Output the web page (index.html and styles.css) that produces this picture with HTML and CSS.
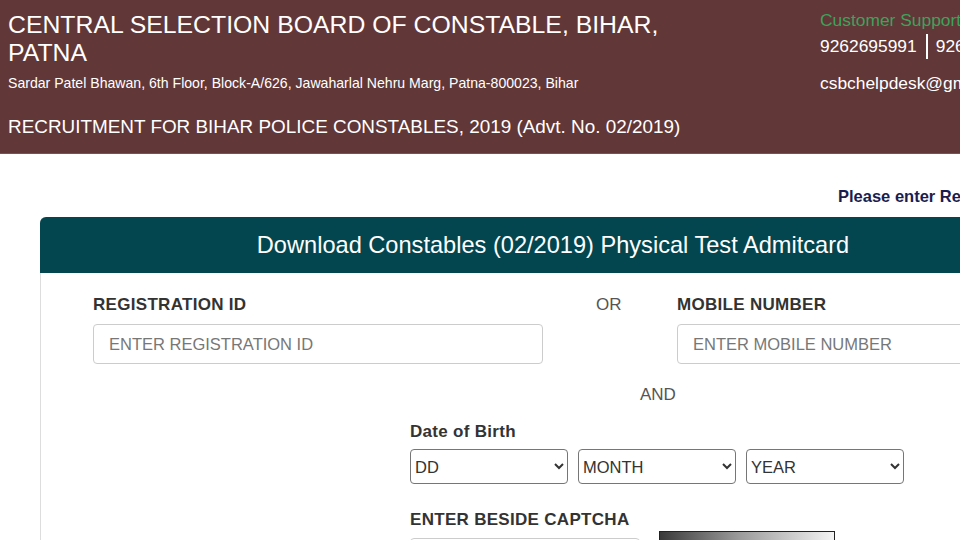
FILE: index.html
```
<!DOCTYPE html>
<html lang="en">
<head>
<meta charset="utf-8">
<title>CSBC Bihar - Physical Test Admitcard</title>
<link rel="stylesheet" href="styles.css">
</head>
<body>
<header class="top">
  <div class="brand">
    <h1 class="title">CENTRAL SELECTION BOARD OF CONSTABLE, BIHAR, PATNA</h1>
    <p class="addr">Sardar Patel Bhawan, 6th Floor, Block-A/626, Jawaharlal Nehru Marg, Patna-800023, Bihar</p>
    <p class="recruit">RECRUITMENT FOR BIHAR POLICE CONSTABLES, 2019 (Advt. No. 02/2019)</p>
  </div>
  <div class="support">
    <div class="cs">Customer Support</div>
    <div class="phones"><span>9262695991</span><span class="sep"></span><span>9262695992</span></div>
    <div class="mail">csbchelpdesk@gmail.com</div>
  </div>
</header>
<main class="main">
  <p class="notice">Please enter Registration ID or Mobile Number and Date of Birth</p>
  <section class="card">
    <div class="card-head">Download Constables (02/2019) Physical Test Admitcard</div>
    <div class="card-body">
      <div class="row-ids">
        <div class="col-id">
          <label class="lbl">REGISTRATION ID</label>
          <input class="txt" type="text" placeholder="ENTER REGISTRATION ID">
        </div>
        <div class="or">OR</div>
        <div class="col-id">
          <label class="lbl">MOBILE NUMBER</label>
          <input class="txt" type="text" placeholder="ENTER MOBILE NUMBER">
        </div>
      </div>
      <div class="and">AND</div>
      <div class="dob">
        <label class="lbl">Date of Birth</label>
        <div class="dob-row">
          <select class="sel"><option>DD</option></select>
          <select class="sel"><option>MONTH</option></select>
          <select class="sel"><option>YEAR</option></select>
        </div>
      </div>
      <div class="cap">
        <label class="lbl cap-lbl">ENTER BESIDE CAPTCHA</label>
        <div class="cap-row">
          <input class="txt cap-input" type="text">
          <div class="cap-img"></div>
        </div>
      </div>
    </div>
  </section>
</main>
</body>
</html>
```
FILE: styles.css
```
html, body {
  margin: 0;
  padding: 0;
  overflow: hidden;
  width: 960px;
  height: 540px;
  background: #fff;
  font-family: "Liberation Sans", Arial, sans-serif;
}
.top {
  display: flex;
  width: 1200px;
  height: 153px;
  background: #623737;
  border-bottom: 1px solid #7a5252;
  color: #fff;
}
.brand {
  width: 820px;
  flex-shrink: 0;
  padding-left: 8px;
  box-sizing: border-box;
}
.title {
  margin: 11px 0 0;
  width: 700px;
  font-size: 24.8px;
  font-weight: normal;
  line-height: 28px;
}
.addr {
  margin: 8px 0 0;
  font-size: 14.1px;
  line-height: 17px;
}
.recruit {
  margin: 24px 0 0;
  font-size: 18.9px;
  line-height: 22px;
}
.support {
  padding-top: 10px;
  font-size: 17.4px;
  white-space: nowrap;
}
.cs {
  color: #3fa15c;
  line-height: 21px;
}
.phones {
  display: flex;
  align-items: center;
  margin-top: 2px;
  height: 26px;
}
.sep {
  width: 2px;
  height: 25px;
  background: #fff;
  margin: 0 8px 0 9px;
}
.mail {
  margin-top: 14px;
  line-height: 21px;
}
.main {
  width: 1200px;
  padding-left: 40px;
}
.notice {
  margin: 32px 0 0 798px;
  font-size: 16.5px;
  font-weight: bold;
  color: #1c1c4e;
  line-height: 20px;
  white-space: nowrap;
}
.card {
  margin-top: 11px;
  width: 1024px;
  border: 1px solid #ddd;
  border-top: none;
  border-radius: 6px 6px 0 0;
}
.card-head {
  height: 56px;
  background: #03464f;
  color: #fff;
  border-radius: 6px 6px 0 0;
  font-size: 23.6px;
  line-height: 56px;
  text-align: center;
  margin: 0 -1px;
}
.card-body {
  padding: 22px 0 0 52px;
}
.row-ids {
  display: flex;
}
.col-id {
  width: 450px;
  flex-shrink: 0;
  display: flex;
  flex-direction: column;
}
.lbl {
  display: block;
  font-size: 17px;
  font-weight: bold;
  letter-spacing: 0.3px;
  color: #333;
  line-height: 20px;
}
.col-id .lbl {
  margin-bottom: 9px;
}
.txt {
  box-sizing: border-box;
  height: 40px;
  width: 450px;
  border: 1px solid #ccc;
  border-radius: 4px;
  padding: 0 15px;
  font-family: "Liberation Sans", Arial, sans-serif;
  font-size: 16.5px;
  color: #555;
  outline: none;
}
.txt::placeholder {
  color: #777;
}
.or {
  width: 134px;
  flex-shrink: 0;
  padding-left: 53px;
  box-sizing: border-box;
  font-size: 17px;
  color: #555;
  line-height: 20px;
}
.and {
  margin: 21px 0 0 547px;
  font-size: 17px;
  color: #555;
  line-height: 20px;
}
.dob {
  margin: 17px 0 0 317px;
}
.dob-row {
  display: flex;
  gap: 10px;
  margin-top: 7px;
}
.sel {
  width: 158px;
  height: 35px;
  box-sizing: border-box;
  border: 1px solid #767676;
  border-radius: 4px;
  background: #fff;
  padding-left: 0;
  font-family: "Liberation Sans", Arial, sans-serif;
  font-size: 16.5px;
  color: #333;
}
.cap {
  margin: 27px 0 0 317px;
}
.cap-lbl {
  line-height: 18px;
}
.cap-row {
  display: flex;
  align-items: flex-start;
  gap: 19px;
}
.cap-input {
  width: 230px;
  margin-top: 9px;
}
.cap-img {
  width: 176px;
  height: 50px;
  margin-top: 2px;
  box-sizing: border-box;
  border: 1px solid #222;
  background: linear-gradient(to right, #3a3a3a, #9a9a9a 45%, #f4f4f4);
}
```
